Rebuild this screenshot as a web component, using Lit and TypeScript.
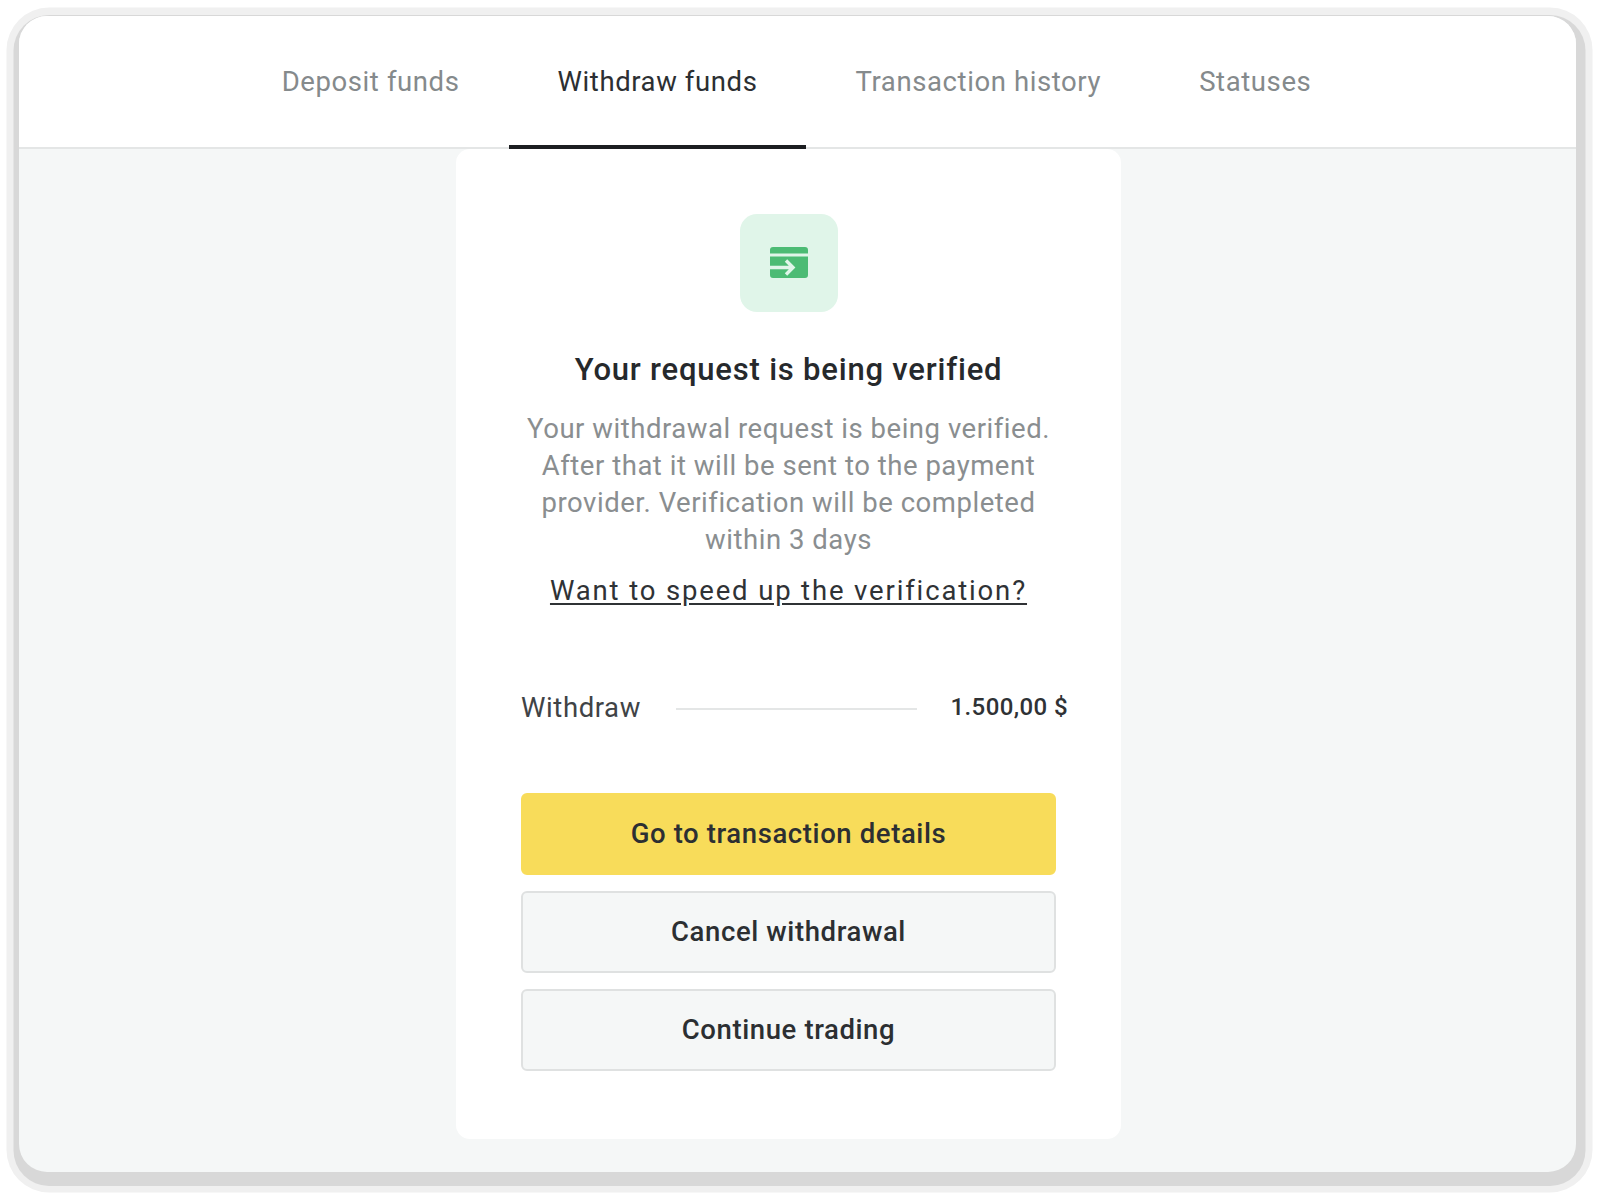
import { LitElement, html, css } from "lit";
import { customElement } from "lit/decorators.js";

@customElement("app-root")
export class AppRoot extends LitElement {
  static styles = css`
    :host {
      display: block;
      height: 1200px;
      background: #fff;
      padding: 16px 23px 0 19px;
      box-sizing: border-box;
      font-family: Roboto, "Liberation Sans", sans-serif;
      letter-spacing: 0.6px;
    }
    .frame {
      height: 1156px;
      border-radius: 28px;
      background: #f5f7f7;
      box-shadow:
        2px 6.5px 0 7.5px #d8d8d8,
        2px 6px 0 14.5px #f0f0f0;
      display: flex;
      flex-direction: column;
    }
    .tabs {
      height: 133px;
      flex: none;
      box-sizing: border-box;
      background: #fff;
      border-radius: 28px 28px 0 0;
      border-bottom: 2px solid #e4e6e6;
      display: flex;
      justify-content: center;
      padding-right: 2px;
    }
    .tab {
      height: 133px;
      flex: none;
      box-sizing: border-box;
      padding: 2px 49px 0;
      display: flex;
      align-items: center;
      font-size: 27.5px;
      color: #858a8c;
      border-bottom: 4px solid transparent;
    }
    .tab.active {
      color: #2c2f32;
      border-bottom-color: #1c1e21;
    }
    .card {
      width: 665px;
      height: 990px;
      box-sizing: border-box;
      margin: 0 0 0 437px;
      padding: 65px 65px;
      background: #fff;
      border-radius: 14px;
      display: flex;
      flex-direction: column;
      align-items: center;
    }
    .icon {
      width: 98px;
      height: 98px;
      flex: none;
      border-radius: 17px;
      background: #e0f5e9;
      display: flex;
      align-items: center;
      justify-content: center;
    }
    h1 {
      margin: 38px 0 0;
      font-size: 31px;
      line-height: 40px;
      font-weight: 500;
      letter-spacing: 0.8px;
      color: #26292c;
      text-align: center;
      white-space: nowrap;
    }
    p {
      margin: 20px -20px 0;
      font-size: 27.5px;
      line-height: 37px;
      letter-spacing: 0.53px;
      color: #8a8e90;
      text-align: center;
      white-space: nowrap;
    }
    a {
      margin-top: 15px;
      font-size: 27.5px;
      line-height: 36px;
      letter-spacing: 1.85px;
      color: #2f3235;
      text-decoration: underline;
      text-underline-offset: 3px;
    }
    .row {
      align-self: stretch;
      margin-top: 80px;
      margin-right: -13px;
      height: 36px;
      display: flex;
      align-items: center;
      gap: 35px;
    }
    .label {
      font-size: 27.5px;
      color: #404346;
    }
    .line {
      flex: 1;
      height: 2px;
      background: #e4e6e6;
      margin-top: 4px;
    }
    .amount {
      font-size: 24px;
      font-weight: 500;
      letter-spacing: 0.4px;
      color: #2f3235;
      margin-left: -1px;
      margin-right: 1px;
    }
    .btn {
      align-self: stretch;
      height: 82px;
      flex: none;
      box-sizing: border-box;
      border-radius: 6px;
      display: flex;
      align-items: center;
      justify-content: center;
      font-size: 27.5px;
      font-weight: 500;
      color: #2c2f32;
      border: 2px solid #dfe1e1;
      background: #f5f7f7;
      margin-top: 16px;
      padding-bottom: 2px;
    }
    .btn.primary {
      margin-top: 68px;
      background: #f8dc5a;
      border-color: #f8dc5a;
    }
    svg {
      display: block;
    }
  `;

  render() {
    return html`
      <div class="frame">
        <div class="tabs">
          <div class="tab">Deposit funds</div>
          <div class="tab active">Withdraw funds</div>
          <div class="tab">Transaction history</div>
          <div class="tab">Statuses</div>
        </div>
        <div class="card">
          <div class="icon">
            <svg width="40" height="32" viewBox="0 0 40 32">
              <path fill="#4cbb74" d="M4 0h32a3 3 0 0 1 3 3v3.500H1V3a3 3 0 0 1 3-3zM1 9.500h38V28a3 3 0 0 1-3 3H4a3 3 0 0 1-3-3z" />
              <path fill="none" stroke="#e0f5e9" stroke-width="3.400" d="M0 20.500H24M17 13.500L24 20.500L17 27.500" />
            </svg>
          </div>
          <h1>Your request is being verified</h1>
          <p>Your withdrawal request is being verified.<br />After that it will be sent to the payment<br />provider. Verification will be completed<br />within 3 days</p>
          <a>Want to speed up the verification?</a>
          <div class="row">
            <span class="label">Withdraw</span>
            <span class="line"></span>
            <span class="amount">1.500,00 $</span>
          </div>
          <div class="btn primary">Go to transaction details</div>
          <div class="btn">Cancel withdrawal</div>
          <div class="btn">Continue trading</div>
        </div>
      </div>
    `;
  }
}
